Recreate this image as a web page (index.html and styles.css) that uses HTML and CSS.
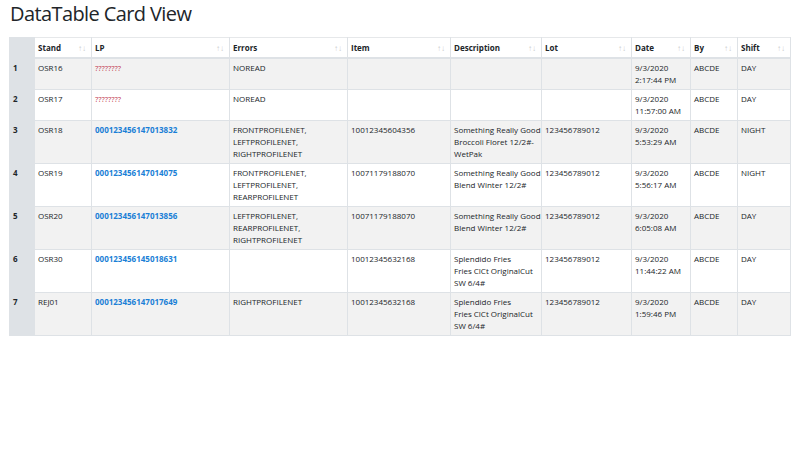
FILE: index.html
```html
<!DOCTYPE html>
<html>
<head>
<meta charset="utf-8">
<link rel="stylesheet" href="styles.css">
</head>
<body>
<h1 class="title">DataTable Card View</h1>
<table class="grid">
  <colgroup>
    <col class="c-idx"><col class="c-stand"><col class="c-lp"><col class="c-err"><col class="c-item"><col class="c-desc"><col class="c-lot"><col class="c-date"><col class="c-by"><col class="c-shift">
  </colgroup>
  <thead>
    <tr>
      <th class="idx"></th>
      <th class="sort">Stand</th>
      <th class="sort">LP</th>
      <th class="sort">Errors</th>
      <th class="sort">Item</th>
      <th class="sort">Description</th>
      <th class="sort">Lot</th>
      <th class="sort">Date</th>
      <th class="sort">By</th>
      <th class="sort">Shift</th>
    </tr>
  </thead>
  <tbody>
    <tr class="odd">
      <td class="idx">1</td><td>OSR16</td><td><span class="bad">????????</span></td><td>NOREAD</td><td></td><td></td><td></td><td>9/3/2020<br>2:17:44 PM</td><td>ABCDE</td><td>DAY</td>
    </tr>
    <tr>
      <td class="idx">2</td><td>OSR17</td><td><span class="bad">????????</span></td><td>NOREAD</td><td></td><td></td><td></td><td>9/3/2020<br>11:57:00 AM</td><td>ABCDE</td><td>DAY</td>
    </tr>
    <tr class="odd">
      <td class="idx">3</td><td>OSR18</td><td><a class="lp" href="#">000123456147013832</a></td><td>FRONTPROFILENET,<br>LEFTPROFILENET,<br>RIGHTPROFILENET</td><td>10012345604356</td><td>Something Really Good<br>Broccoli Floret 12/2#-<br>WetPak</td><td>123456789012</td><td>9/3/2020<br>5:53:29 AM</td><td>ABCDE</td><td>NIGHT</td>
    </tr>
    <tr>
      <td class="idx">4</td><td>OSR19</td><td><a class="lp" href="#">000123456147014075</a></td><td>FRONTPROFILENET,<br>LEFTPROFILENET,<br>REARPROFILENET</td><td>10071179188070</td><td>Something Really Good<br>Blend Winter 12/2#</td><td>123456789012</td><td>9/3/2020<br>5:56:17 AM</td><td>ABCDE</td><td>NIGHT</td>
    </tr>
    <tr class="odd">
      <td class="idx">5</td><td>OSR20</td><td><a class="lp" href="#">000123456147013856</a></td><td>LEFTPROFILENET,<br>REARPROFILENET,<br>RIGHTPROFILENET</td><td>10071179188070</td><td>Something Really Good<br>Blend Winter 12/2#</td><td>123456789012</td><td>9/3/2020<br>6:05:08 AM</td><td>ABCDE</td><td>DAY</td>
    </tr>
    <tr>
      <td class="idx">6</td><td>OSR30</td><td><a class="lp" href="#">000123456145018631</a></td><td></td><td>10012345632168</td><td>Splendido Fries<br>Fries ClCt OriginalCut<br>SW 6/4#</td><td>123456789012</td><td>9/3/2020<br>11:44:22 AM</td><td>ABCDE</td><td>DAY</td>
    </tr>
    <tr class="odd">
      <td class="idx">7</td><td>REJ01</td><td><a class="lp" href="#">000123456147017649</a></td><td>RIGHTPROFILENET</td><td>10012345632168</td><td>Splendido Fries<br>Fries ClCt OriginalCut<br>SW 6/4#</td><td>123456789012</td><td>9/3/2020<br>1:59:46 PM</td><td>ABCDE</td><td>DAY</td>
    </tr>
  </tbody>
</table>
</body>
</html>
```
FILE: styles.css
```css
html, body {
  margin: 0;
  padding: 0;
  background: #ffffff;
}
body {
  padding: 0 10px 0 9px;
  font-family: "Open Sans", "Noto Sans", sans-serif;
  color: #212529;
}
.title {
  margin: 0;
  padding: 1px 0 0 1px;
  height: 36px;
  font-size: 20px;
  font-weight: 400;
  line-height: 26px;
  letter-spacing: -0.6px;
  color: #212529;
}
.grid {
  width: 781px;
  table-layout: fixed;
  border-collapse: collapse;
  font-size: 8px;
  line-height: 12px;
}
.c-idx { width: 25px; }
.c-stand { width: 57px; }
.c-lp { width: 138px; }
.c-err { width: 118px; }
.c-item { width: 103px; }
.c-desc { width: 91px; }
.c-lot { width: 90px; }
.c-date { width: 59px; }
.c-by { width: 47px; }
.c-shift { width: 53px; }

.grid th, .grid td {
  text-align: left;
  vertical-align: top;
  padding: 3px 3px;
  border: 1px solid #dee2e6;
  white-space: nowrap;
  overflow: hidden;
}
.grid th {
  position: relative;
  font-weight: 700;
  padding: 4px 3px 3px;
  border-top: 1px solid #e6e8ea;
  border-bottom: 2px solid #dee2e6;
  background: #ffffff;
}
.grid th.sort::before,
.grid th.sort::after {
  position: absolute;
  top: 4px;
  font-weight: 400;
  font-size: 8px;
  color: #212529;
  opacity: 0.25;
}
.grid th.sort::before { content: "\2191"; right: 9px; }
.grid th.sort::after { content: "\2193"; right: 5px; }
.grid .idx {
  background: #dee2e6;
  font-weight: 700;
  border-color: #dee2e6;
}
.grid tbody tr.odd td {
  background: #f2f2f2;
}
.grid tbody tr.odd td.idx {
  background: #dee2e6;
}
.lp {
  color: #1a7fd6;
  font-weight: 700;
  text-decoration: none;
}
.bad {
  color: #c0334a;
  font-size: 7.5px;
  line-height: 12px;
}
```
